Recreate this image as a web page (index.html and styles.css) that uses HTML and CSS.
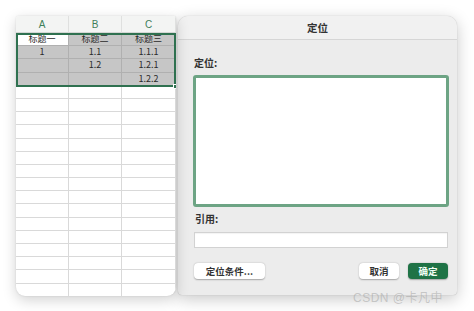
FILE: index.html
```html
<!DOCTYPE html>
<html lang="zh">
<head>
<meta charset="utf-8">
<link rel="stylesheet" href="styles.css">
</head>
<body>
<div class="stage">
  <div class="sheet">
    <div class="grid">
      <div class="colhead">A</div><div class="colhead">B</div><div class="colhead">C</div>
      <div class="cell active">标题一</div><div class="cell sel">标题二</div><div class="cell sel">标题三</div>
      <div class="cell sel">1</div><div class="cell sel">1.1</div><div class="cell sel">1.1.1</div>
      <div class="cell sel"></div><div class="cell sel">1.2</div><div class="cell sel">1.2.1</div>
      <div class="cell sel"></div><div class="cell sel"></div><div class="cell sel">1.2.2</div>
      <div class="cell"></div><div class="cell"></div><div class="cell"></div>
      <div class="cell"></div><div class="cell"></div><div class="cell"></div>
      <div class="cell"></div><div class="cell"></div><div class="cell"></div>
      <div class="cell"></div><div class="cell"></div><div class="cell"></div>
      <div class="cell"></div><div class="cell"></div><div class="cell"></div>
      <div class="cell"></div><div class="cell"></div><div class="cell"></div>
      <div class="cell"></div><div class="cell"></div><div class="cell"></div>
      <div class="cell"></div><div class="cell"></div><div class="cell"></div>
      <div class="cell"></div><div class="cell"></div><div class="cell"></div>
      <div class="cell"></div><div class="cell"></div><div class="cell"></div>
      <div class="cell"></div><div class="cell"></div><div class="cell"></div>
      <div class="cell"></div><div class="cell"></div><div class="cell"></div>
      <div class="cell"></div><div class="cell"></div><div class="cell"></div>
      <div class="cell"></div><div class="cell"></div><div class="cell"></div>
      <div class="cell"></div><div class="cell"></div><div class="cell"></div>
      <div class="cell"></div><div class="cell"></div><div class="cell"></div>
    </div>
    <div class="selection"><span class="handle"></span></div>
  </div>
  <div class="dialog">
    <div class="titlebar">定位</div>
    <div class="body">
      <div class="label">定位:</div>
      <div class="listbox"></div>
      <div class="label ref">引用:</div>
      <div class="input"></div>
      <div class="buttons">
        <button class="btn">定位条件...</button>
        <div class="spacer"></div>
        <button class="btn">取消</button>
        <button class="btn primary">确定</button>
      </div>
    </div>
  </div>
  <div class="watermark">CSDN @卡凡中</div>
</div>
</body>
</html>
```

FILE: styles.css
```css
* { box-sizing: border-box; }
html, body { margin: 0; padding: 0; background: #ffffff; }
body {
  width: 474px;
  height: 311px;
  overflow: hidden;
  font-family: "Noto Sans CJK SC", "Noto Sans", sans-serif;
  color: #222;
}
.stage {
  position: relative;
  display: flex;
  gap: 2px;
  padding: 16px 0 0 16px;
  height: 311px;
}
.sheet {
  position: relative;
  width: 160px;
  height: 280px;
  background: #fff;
  border-radius: 3px 3px 9px 9px;
  overflow: hidden;
  box-shadow: 0 4px 14px rgba(0,0,0,0.18), 0 0 2px rgba(0,0,0,0.12);
}
.grid {
  display: grid;
  grid-template-columns: 53px 53px 54px;
  grid-template-rows: 17px;
  grid-auto-rows: 13.2px;
}
.colhead {
  background: #f3f4f3;
  color: #3e7f5a;
  font-family: "Liberation Sans", sans-serif;
  font-size: 10px;
  display: flex;
  align-items: center;
  justify-content: center;
  border-right: 1px solid #dfe0df;
  border-bottom: 1px solid #d4d6d4;
}
.cell {
  border-right: 1px solid #d9d9d9;
  border-bottom: 1px solid #d9d9d9;
  font-size: 9px;
  line-height: 12px;
  text-align: center;
  color: #2a2a2a;
  overflow: hidden;
  white-space: nowrap;
}
.cell.sel { background: #c6c6c6; border-color: #b0b0b0; }
.cell.active { background: #ffffff; border-color: #b0b0b0; }
.selection {
  position: absolute;
  left: 0;
  top: 17px;
  width: 160px;
  height: 54px;
  border: 2px solid #2f7150;
  pointer-events: none;
}
.handle {
  position: absolute;
  right: -4px;
  bottom: -4px;
  width: 5px;
  height: 5px;
  background: #2f7150;
  border: 1px solid #fff;
}
.dialog {
  width: 279px;
  height: 279px;
  background: #ececec;
  border-radius: 10px 10px 4px 4px;
  box-shadow: 0 4px 16px rgba(0,0,0,0.22), 0 0 1px rgba(0,0,0,0.3);
  display: flex;
  flex-direction: column;
}
.titlebar {
  height: 24px;
  flex: none;
  display: flex;
  align-items: center;
  justify-content: center;
  font-size: 10.5px;
  font-weight: 700;
  color: #333;
  background: #f1f1f1;
  border-radius: 10px 10px 0 0;
  border-bottom: 1px solid #d6d6d6;
}
.body {
  padding: 17px 8px 0 15px;
  display: flex;
  flex-direction: column;
}
.label {
  font-size: 10px;
  font-weight: 700;
  color: #333;
  line-height: 12px;
  padding-left: 1px;
}
.listbox {
  margin-top: 6px;
  height: 132px;
  background: #fff;
  border: 3px solid #6da484;
  border-radius: 3px;
}
.label.ref { margin-top: 6px; padding-left: 2px; }
.input {
  margin: 7px 1px 0 1px;
  height: 16px;
  background: #fff;
  border: 1px solid #d2d2d2;
  box-shadow: inset 0 1px 1px rgba(0,0,0,0.05);
}
.buttons {
  margin-top: 15px;
  display: flex;
  gap: 9px;
  padding: 0 1px;
}
.spacer { flex: 1; }
.btn {
  height: 16px;
  padding: 0;
  font-family: "Noto Sans CJK SC", sans-serif;
  font-size: 9.5px;
  font-weight: 700;
  color: #333;
  background: #fff;
  border: none;
  border-radius: 4px;
  box-shadow: 0 0.5px 1.5px rgba(0,0,0,0.3);
  line-height: 16px;
  width: 40px;
}
.btn:first-child { width: 71px; }
.btn.primary {
  background: #1f7346;
  color: #f2fff6;
}
.watermark {
  position: absolute;
  left: 353px;
  top: 288px;
  font-family: "Liberation Sans", "Noto Sans CJK SC", sans-serif;
  font-size: 12px;
  color: rgba(150,150,150,0.45);
  letter-spacing: 0.5px;
}
```
